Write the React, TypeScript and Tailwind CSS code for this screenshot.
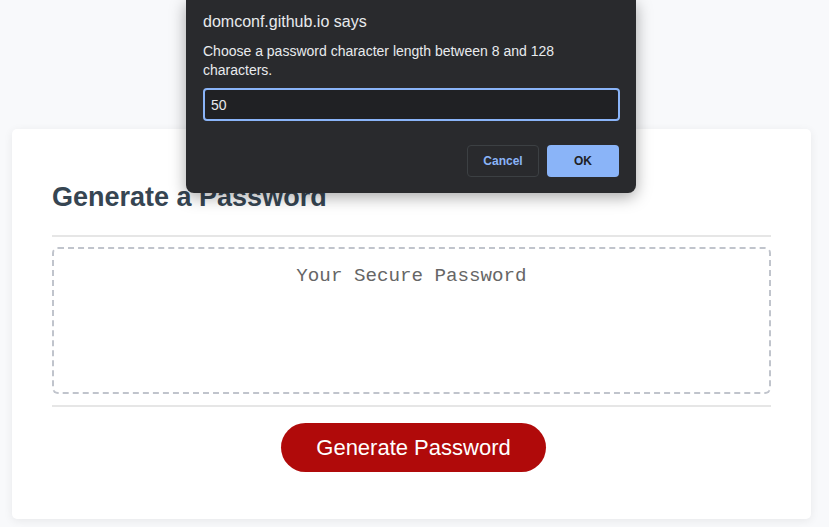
import React, { useState } from 'react';

function PromptDialog() {
  const [value, setValue] = useState('50');

  return (
    <div className="absolute left-[186px] top-0 w-[450px] h-[193px] bg-[#292a2d] rounded-b-[8px] shadow-[0_4px_16px_rgba(0,0,0,0.35)] px-[17px] font-['Liberation_Sans',Arial,sans-serif] text-[#e8eaed]">
      <div className="pt-[12px] text-[16px] leading-[20px]">domconf.github.io says</div>
      <p className="mt-[10px] max-w-[370px] text-[14px] leading-[19px]">
        Choose a password character length between 8 and 128 characters.
      </p>
      <input
        autoFocus
        value={value}
        onChange={(e) => setValue(e.target.value)}
        className="mt-[8px] block w-[417px] h-[33px] bg-[#202124] border-2 border-[#8ab4f8] rounded-[4px] px-[6px] text-[14px] text-[#e8eaed] outline-none"
      />
      <div className="mt-[24px] flex justify-end gap-[8px]">
        <button className="w-[72px] h-[32px] rounded-[4px] border border-[#3c4043] text-[12px] font-bold text-[#8ab4f8]">
          Cancel
        </button>
        <button className="w-[72px] h-[32px] rounded-[4px] bg-[#8ab4f8] text-[12px] font-bold text-[#202124]">
          OK
        </button>
      </div>
    </div>
  );
}

export default function App() {
  return (
    <div className="relative min-h-[527px] bg-[#f8f9fb] font-['Liberation_Sans',Arial,sans-serif]">
      <div className="pt-[129px] pl-3">
        <div className="w-[799px] bg-white rounded-[5px] shadow-[0_2px_10px_rgba(0,0,0,0.07)] px-10 pt-[52px] pb-[47px]">
          <h2 className="text-[27px] leading-[32px] font-bold text-[#364552]">Generate a Password</h2>
          <div className="mt-[22px] h-[2px] bg-[#e6e6e6]" />
          <div className="mt-[10px] h-[147px] border-2 border-dashed border-[#c0c4cc] rounded-[6px] pt-[13px] text-center font-['Liberation_Mono','Courier_New',monospace] text-[19.2px] text-[#666666]">
            Your Secure Password
          </div>
          <div className="mt-[11px] h-[2px] bg-[#e6e6e6]" />
          <div className="mt-[16px] flex justify-center">
            <button className="h-[49px] px-[35px] rounded-full bg-[#b00a0a] text-white text-[22px] ml-[4px]">
              Generate Password
            </button>
          </div>
        </div>
      </div>
      <PromptDialog />
    </div>
  );
}
